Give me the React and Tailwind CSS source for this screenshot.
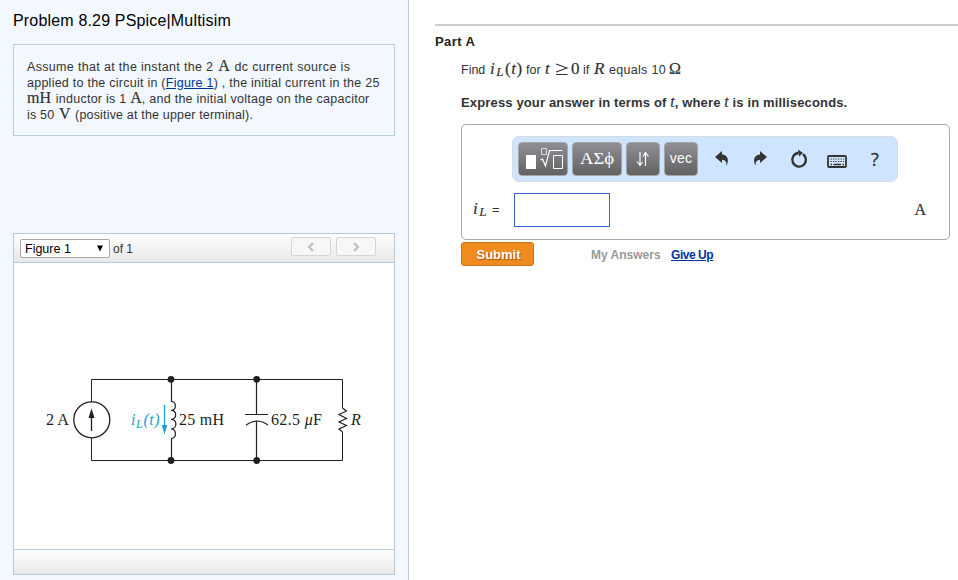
const MATH = "font-['Liberation_Serif',serif] text-[16px] leading-[0] tracking-normal [-webkit-text-stroke:0.2px]";

function M({ children, className = "" }) {
  return <span className={`${MATH} ${className}`}>{children}</span>;
}

function IL({ className = "" }) {
  return (
    <span className={`${MATH} italic ${className}`}>
      <span className="text-[17px]">i</span>
      <span className="relative left-[1.5px] top-[2px] text-[13px]">L</span>
    </span>
  );
}

const toolBtn =
  "flex h-[34px] shrink-0 items-center justify-center rounded-[4px] border border-[#a5a5a5] bg-gradient-to-b from-[#918f96] to-[#626262] text-white";

function Circuit() {
  return (
    <svg width="380" height="286" viewBox="14 263 380 286" className="block" fontFamily="'Liberation Serif', serif" fontSize="16" fill="#231f20">
      <g fill="none" stroke="#231f20" strokeWidth="1">
        <path d="M91.5 402V379.5H342.5V408M91.5 438V460.500H342.500V432" />
        <circle cx="91.800" cy="419.800" r="18" strokeWidth="1.300" />
        <path d="M91.500 431V415" strokeWidth="1.300" />
        <path d="M171.500 379.500V401.500C176.500 401.500 177 409.500 171 410.500C177 409.500 177.500 419.500 171 419.500C177.500 419 177.500 429 171 429C176.500 428.500 177 438 171.500 438.500V460.500" strokeWidth="1.200" />
        <path d="M256.500 379.500V414M245 414.500H268M246 425Q256.500 417 268 425M256.500 421V460.500" strokeWidth="1.200" />
        <path d="M342.500 408L346.500 411L339 414.500L346.500 418.500L339 422L346.500 425.500L339 429L342.500 432" strokeWidth="1.200" />
      </g>
      <path d="M91.500 408.500L94.500 418H88.500Z" />
      <circle cx="171" cy="379.300" r="3.400" />
      <circle cx="171" cy="460.500" r="3.400" />
      <circle cx="256.700" cy="379.300" r="3.400" />
      <circle cx="256.700" cy="460.500" r="3.400" />
      <path d="M164.500 405V426" stroke="#1b9dd9" strokeWidth="1.300" />
      <path d="M161.800 425H167.200L164.500 434.500Z" fill="#1b9dd9" />
      <text x="46" y="425" textLength="23" lengthAdjust="spacingAndGlyphs">2 A</text>
      <g fill="#1b9dd9" fontStyle="italic">
        <text x="131" y="425">i</text>
        <text x="136" y="428" fontSize="12">L</text>
        <text x="143.500" y="425" textLength="16">(t)</text>
      </g>
      <text x="179" y="425" textLength="45">25 mH</text>
      <text x="271" y="425" textLength="51">62.5 <tspan fontStyle="italic">μ</tspan>F</text>
      <text x="351" y="425" fontStyle="italic">R</text>
    </svg>
  );
}

function NavButton({ d }) {
  return (
    <div className="flex h-[19px] w-[40px] items-center justify-center rounded-[2px] border border-[#d5d5d5] bg-[#f7f7f7]">
      <svg width="8" height="10" viewBox="0 0 8 10" fill="none" stroke="#bdbdbd" strokeWidth="2">
        <path d={d} />
      </svg>
    </div>
  );
}

function LeftPanel() {
  return (
    <div className="flex h-[580px] w-[409px] shrink-0 flex-col border-r border-[#b5cbdf] bg-[#f3f8ff] pl-[13px]">
      <h1 className="mt-[11px] h-[33px] text-[16px] leading-[20px] tracking-[0.17px] text-black">Problem 8.29 PSpice|Multisim</h1>
      <div className="h-[92px] w-[382px] whitespace-nowrap border border-[#b9cde0] pl-[13px] pt-[14px] text-[12.5px] text-[#333]">
        <div className="h-4 leading-4 tracking-[0.33px]">Assume that at the instant the 2 <M className="pr-px pl-px">A</M> dc current source is</div>
        <div className="h-4 leading-4 tracking-[0.25px]">applied to the circuit in (<a className="text-[#0033a0] underline">Figure 1</a>) , the initial current in the 25</div>
        <div className="h-4 leading-4 tracking-[0.26px]"><M className="pr-px">mH</M> inductor is 1 <M>A</M>, and the initial voltage on the capacitor</div>
        <div className="h-4 leading-4 tracking-[0.17px]">is 50 <M className="px-px">V</M> (positive at the upper terminal).</div>
      </div>
      <div className="mt-[97px] h-[342px] w-[382px] border border-[#b5cbdf] bg-white">
        <div className="flex h-[29px] border-b border-[#b5cbdf] bg-gradient-to-b from-white to-[#e8e8e8] pl-[6px] pr-[18px] pt-[3px]">
          <div className="mt-[2px] flex h-[19px] w-[90px] items-center justify-between rounded-[2px] border border-[#a9a9a9] bg-white pl-1 pr-[5px] text-[12.5px] text-black">
            <span className="pt-px">Figure 1</span>
            <svg width="8" height="7" viewBox="0 0 8 7"><path d="M1 .500H7L4 6.500Z" /></svg>
          </div>
          <span className="ml-[3px] mt-[2px] text-[12px] leading-[20px] text-[#333]">of 1</span>
          <div className="ml-auto flex gap-[5px]">
            <NavButton d="M6 1L2 5L6 9" />
            <NavButton d="M2 1L6 5L2 9" />
          </div>
        </div>
        <Circuit />
        <div className="h-[25px] border-t border-[#b5cbdf] bg-gradient-to-b from-white to-[#e8e8e8]" />
      </div>
    </div>
  );
}

function Toolbar() {
  return (
    <div className="ml-[50px] flex h-[46px] w-[386px] items-center rounded-[7px] border border-[#d5dce4] bg-[#cfe5ff] pl-[5px]">
      <div className={`${toolBtn} w-[50px]`}>
        <svg width="40" height="24" viewBox="0 0 40 24" fill="none" stroke="white">
          <path d="M3 8h10v14H3z" fill="white" stroke="none" />
          <path d="M18.500 1.500h5v6h-5z" strokeWidth="1" stroke="#ddd" />
          <path d="M17.500 13L19.500 12L22.500 19L26.500 3.500H39.500" strokeWidth="1.200" />
          <path d="M30.500 8.500h9v13h-9z" />
        </svg>
      </div>
      <div className={`${toolBtn} ml-1 w-[50px]`}>
        <svg width="36" height="22" viewBox="0 0 36 22" fill="white" className="font-['Liberation_Serif',serif]">
          <text x="1" y="16" textLength="34" lengthAdjust="spacingAndGlyphs" fontSize="16.500">ΑΣϕ</text>
        </svg>
      </div>
      <div className={`${toolBtn} ml-[4px] w-[34px]`}>
        <svg width="14" height="18" viewBox="0 0 14 18" fill="none" stroke="white" strokeWidth="1.200">
          <path d="M4 2V15M1 11.500L4 15.500L6.500 12M9.500 16V3M7 6.500L9.500 2.500L12.500 6.500" />
        </svg>
      </div>
      <div className={`${toolBtn} ml-1 w-[34px] pb-px text-[14px] tracking-[0.2px]`}>vec</div>
      <svg width="16" height="18" viewBox="0 0 16 18" className="ml-[16px]" fill="#333">
        <path d="M1 7L8 1V4.500C13.500 5 15.500 9.500 12.500 16C12.800 12 11.500 10 8 9.800V13Z" />
      </svg>
      <svg width="16" height="18" viewBox="0 0 16 18" className="ml-[22px]" fill="#333">
        <path d="M15 7L8 1V4.500C2.500 5 .500 9.500 3.500 16C3.200 12 4.500 10 8 9.800V13Z" />
      </svg>
      <svg width="18" height="20" viewBox="0 0 18 20" className="ml-[22px]">
        <path d="M13 5.200A6.800 6.800 0 1 1 8.500 4" fill="none" stroke="#333" strokeWidth="2.300" />
        <path d="M8 .500L13 4L9 7.500Z" fill="#333" />
      </svg>
      <svg width="20" height="14" viewBox="0 0 20 14" className="ml-[19px] mt-[6px]" fill="none" stroke="#333">
        <rect x="1" y="1" width="18" height="11" rx="1" strokeWidth="1.800" />
        <path d="M3.500 4H17M3.500 6.500H17" strokeWidth="1.200" strokeDasharray="1.300 1.200" />
        <path d="M3.500 9.500H5M6.500 9.500H14M15.500 9.500H17" strokeWidth="1.300" />
      </svg>
      <span className="ml-[24px] font-['Open_Sans',sans-serif] text-[18px] leading-none text-[#333] [-webkit-text-stroke:0.3px]">?</span>
    </div>
  );
}

function RightPanel() {
  return (
    <div className="flex flex-1 flex-col pl-[26px] pt-[24px] text-[13px] text-[#333]">
      <div className="h-[2px] w-full shrink-0 bg-[#ccc]" />
      <h2 className="mt-[8px] h-4 font-bold leading-4 tracking-[0.4px] text-[#222]">Part A</h2>
      <div className="flex flex-col pl-[26px]">
        <p className="mt-[11px] flex h-4 items-baseline whitespace-pre text-[12.5px] leading-4">
          <span className="w-[29px]">Find</span>
          <IL className="w-[15px]" />
          <M className="w-[21px] text-[17px]! tracking-[0.5px]!">(<i>t</i>)</M>
          <span className="w-[19px]">for</span>
          <M className="w-[9px] text-[17px]! italic">t</M>
          <svg width="16" height="13" viewBox="0 0 16 13" className="relative top-[2px]" fill="none" stroke="#333" strokeWidth="1.100">
            <path d="M2 1L13 5L2 9M2 11.500H13.500" />
          </svg>
          <M className="w-[13px] pl-px text-[17px]!">0</M>
          <span className="w-[11px]">if</span>
          <M className="w-[15px] text-[17px]! italic">R</M>
          <span className="w-[60px] tracking-[0.3px]">equals 10</span>
          <M>Ω</M>
        </p>
        <p className="mt-[18px] h-4 whitespace-nowrap font-bold leading-4 tracking-[0.15px]">
          Express your answer in terms of <M className="font-normal italic">t</M>, where <M className="font-normal italic">t</M> is in milliseconds.
        </p>
        <div className="mt-[13px] flex h-[116px] w-[489px] flex-col rounded-[5px] border border-[#a9a9a9] pt-[11px]">
          <Toolbar />
          <div className="mt-[11px] flex h-[34px] items-center pl-[11px]">
            <div className="flex w-[41px] items-baseline"><IL className="w-[19px]" /><span>=</span></div>
            <div className="h-[34px] w-[96px] border border-[#3566cc] bg-white" />
            <M className="ml-auto mr-[23px]">A</M>
          </div>
        </div>
        <div className="mt-[2px] flex h-[24px] items-center text-[12px] font-bold">
          <button className="h-[24px] w-[73px] rounded-[3px] border border-[#cf711c] bg-[#f08c1e] pl-[2px] pt-px text-[13px] font-bold text-white [text-shadow:1px_1px_1px_#9b5410]">Submit</button>
          <span className="ml-[57px] w-[70px] whitespace-nowrap pt-[2px] text-[#999]">My Answers</span>
          <a className="ml-[10px] pt-[2px] tracking-[-0.45px] text-[#0033a0] underline">Give Up</a>
        </div>
      </div>
    </div>
  );
}

export default function App() {
  return (
    <div className="flex h-[580px] w-[958px] overflow-hidden bg-white font-['Liberation_Sans',Arial,sans-serif]">
      <LeftPanel />
      <RightPanel />
    </div>
  );
}
